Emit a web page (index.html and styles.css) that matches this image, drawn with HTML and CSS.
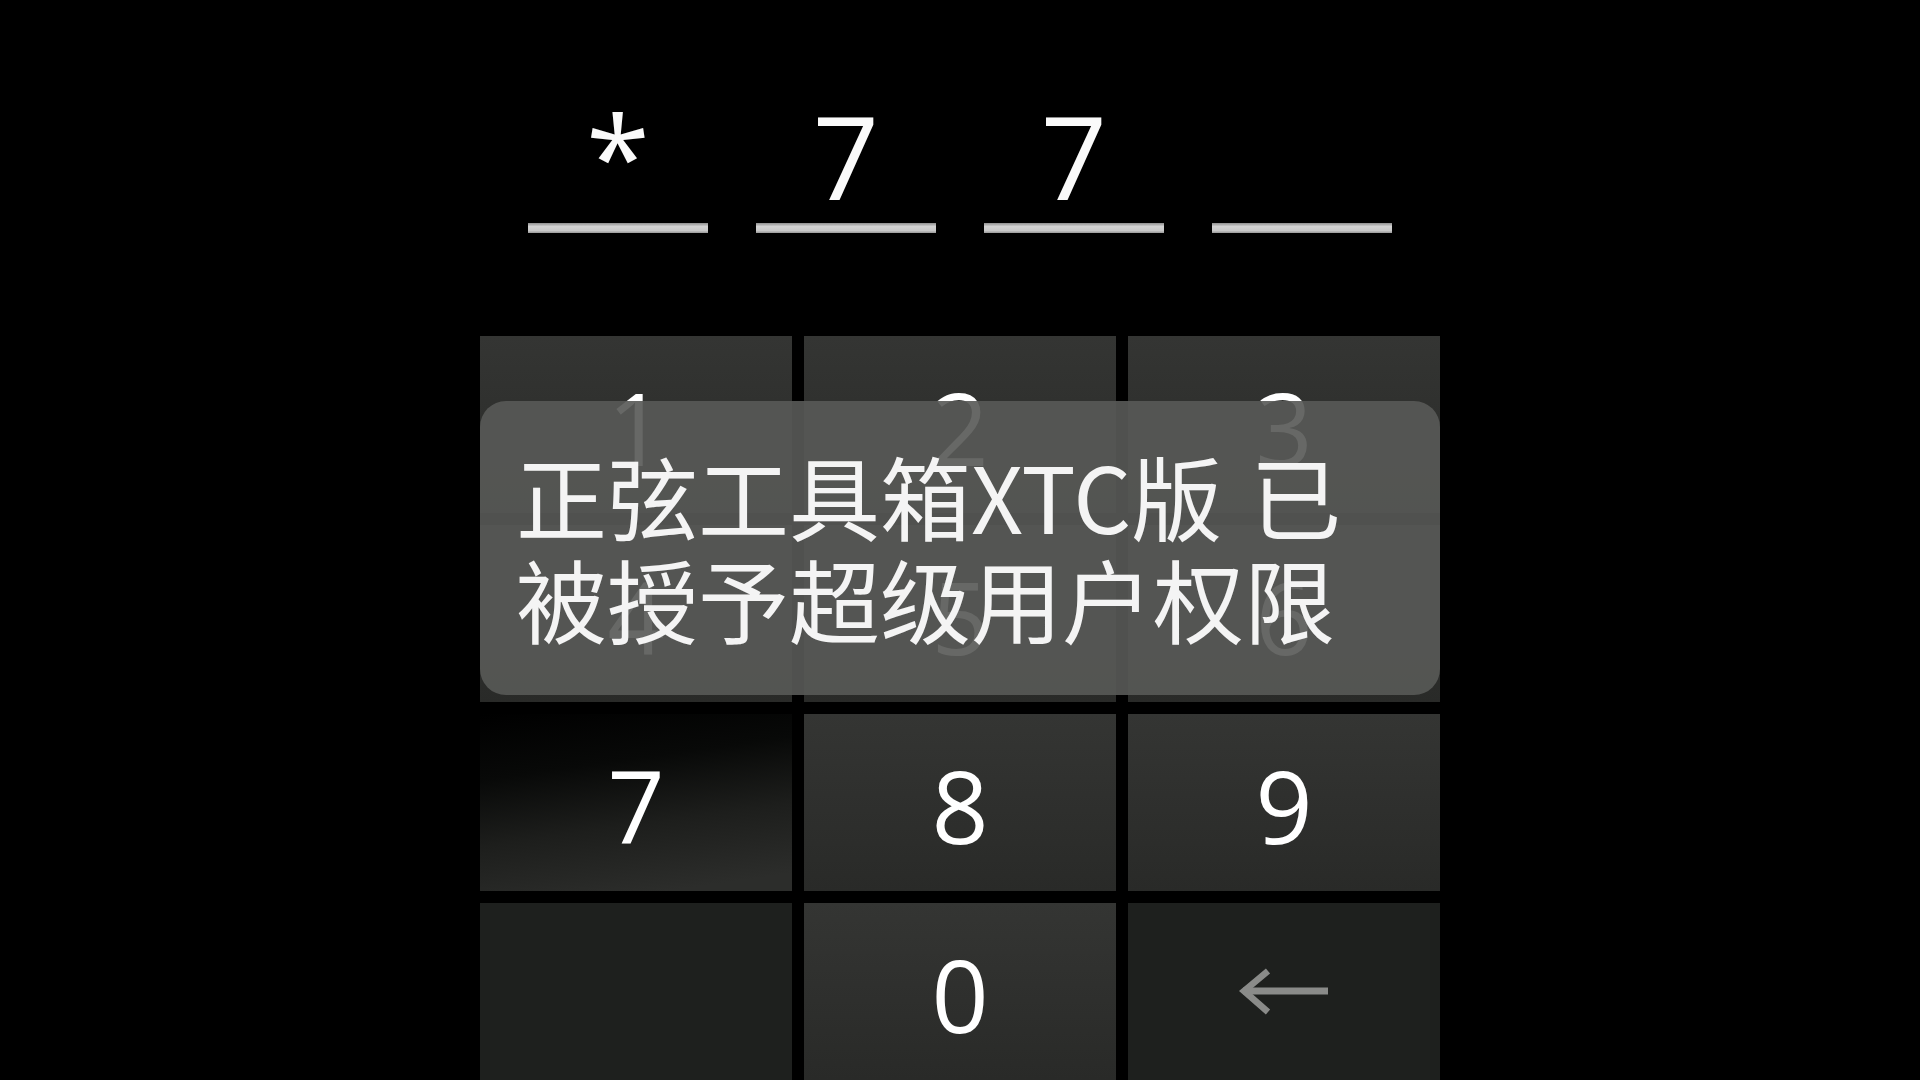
FILE: index.html
```html
<!DOCTYPE html>
<html lang="zh-CN">
<head>
<meta charset="utf-8">
<title>PIN</title>
<link rel="stylesheet" href="styles.css">
</head>
<body>
<div class="screen">
  <div class="pin">
    <div class="slot"><span class="digit">*</span><span class="line"></span></div>
    <div class="slot"><span class="digit">7</span><span class="line"></span></div>
    <div class="slot"><span class="digit">7</span><span class="line"></span></div>
    <div class="slot"><span class="digit"></span><span class="line"></span></div>
  </div>
  <div class="pad">
    <div class="key">1</div>
    <div class="key">2</div>
    <div class="key">3</div>
    <div class="key">4</div>
    <div class="key">5</div>
    <div class="key">6</div>
    <div class="key pressed">7</div>
    <div class="key">8</div>
    <div class="key">9</div>
    <div class="key flat"></div>
    <div class="key">0</div>
    <div class="key flat back">
      <svg class="arrow" width="92" height="48" viewBox="0 0 92 48">
        <line x1="5" y1="23" x2="90" y2="23" stroke="#8a8b89" stroke-width="7"/>
        <polyline points="30,3 6,23 30,44" fill="none" stroke="#8a8b89" stroke-width="6.5"/>
      </svg>
    </div>
    <div class="toast">正弦工具箱XTC版<span class="sp"> </span>已<br>被授予超级用户权限</div>
  </div>
</div>
</body>
</html>
```
FILE: styles.css
```css
html, body {
  margin: 0;
  padding: 0;
  background: #000;
  width: 1920px;
  height: 1080px;
  overflow: hidden;
}

.screen {
  width: 960px;
  margin: 0 auto;
  display: flex;
  flex-direction: column;
}

.pin {
  display: flex;
  justify-content: center;
  gap: 48px;
  padding-top: 96px;
}

.slot {
  width: 180px;
  display: flex;
  flex-direction: column;
  align-items: center;
}

.digit {
  display: block;
  height: 118px;
  font-family: "Open Sans", "Liberation Sans", sans-serif;
  font-size: 116px;
  line-height: 118px;
  color: #fafafa;
}

.line {
  display: block;
  width: 180px;
  height: 10px;
  margin-top: 9px;
  background: linear-gradient(#8e8e8e, #d2d2d2 35%, #c9c9c9 75%, #9a9a9a);
}

.pad {
  position: relative;
  margin-top: 103px;
  display: grid;
  grid-template-columns: repeat(3, 1fr);
  grid-auto-rows: 177px;
  column-gap: 12px;
  row-gap: 12px;
}

.key {
  display: flex;
  align-items: center;
  justify-content: center;
  padding-top: 4px;
  box-sizing: border-box;
  background: linear-gradient(#343533, #292a28);
  color: #fff;
  font-family: "Open Sans", "Liberation Sans", sans-serif;
  font-size: 100px;
  line-height: 1.3;
}

.key.pressed {
  background: linear-gradient(172deg, #000 0%, #080908 30%, #1d1e1c 60%, #2c2d2b 92%);
}

.key.flat {
  background: #1e201e;
}

.key.back {
  padding-top: 0;
}

.arrow {
  display: block;
}

.toast {
  position: absolute;
  top: 65px;
  left: 0;
  width: 960px;
  height: 294px;
  box-sizing: border-box;
  padding: 42px 36px 0;
  border-radius: 26px;
  background: rgba(88, 89, 87, 0.91);
  color: #f4f4f4;
  font-family: "Noto Sans CJK SC", "Noto Sans", sans-serif;
  font-size: 91px;
  line-height: 103px;
  white-space: nowrap;
}

.sp {
  display: inline-block;
  width: 28px;
}
```
